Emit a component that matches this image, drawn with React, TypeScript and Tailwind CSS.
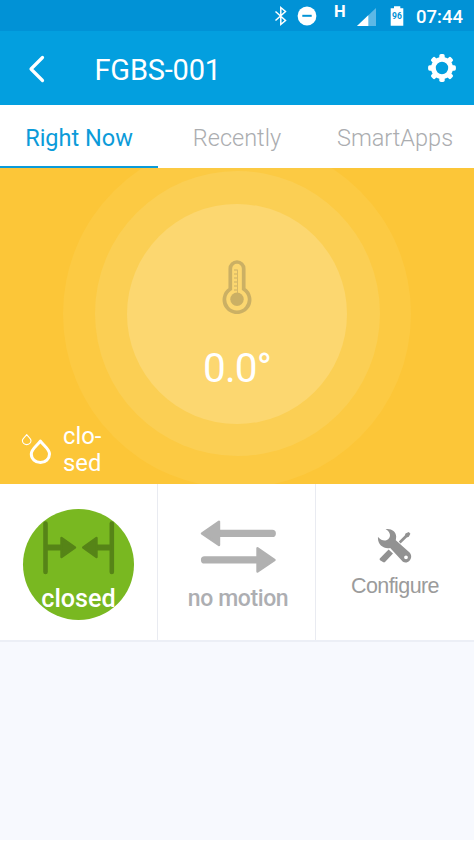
import type { ReactNode } from 'react';

const tabs = ['Right Now', 'Recently', 'SmartApps'];

const StatusBar = () => (
  <div className="flex h-[31px] shrink-0 justify-end bg-[#0192d6] text-white">
    <svg className="h-[31px] w-[144px]" viewBox="270 0 144 31" fill="none">
      <path d="M275.5 11.5 L285.5 20.5 L280.8 24.5 V7.5 L285.5 11.5 L275.5 20.5" stroke="#fff" strokeWidth="1.5" />
      <circle cx="307" cy="16" r="9.4" fill="#fff" />
      <path d="M302.3 15.8 H311.7" stroke="#0192d6" strokeWidth="2" />
      <path d="M357 26 L376 8 V26 Z" fill="#5cb8e6" />
      <path d="M357 26 L368.3 15.3 V26 Z" fill="#fff" />
      <path d="M394 6.3 H400.3 V8.3 H403.3 V25.7 H390.7 V8.3 H394 Z" fill="#fff" />
      <text x="334" y="17" fill="#fff" fontFamily="Roboto" fontSize="16.5" fontWeight="700">
        H
      </text>
      <text x="392" y="19.2" fill="#0192d6" fontFamily="Roboto" fontSize="8.5" fontWeight="700">
        96
      </text>
    </svg>
    <span className="w-[60px] pl-[2px] pt-[3px] text-[18.5px] font-medium leading-[28px]">07:44</span>
  </div>
);

const Header = () => (
  <header className="flex h-[74px] shrink-0 items-center bg-[#039fdf] text-white">
    <svg className="ml-[26px] mt-[2px] h-[32px] w-[22px]" viewBox="0 0 22 32" fill="none">
      <path d="M16.5 4.5 L5 16 L16.5 27.5" stroke="#fff" strokeWidth="3.2" strokeLinecap="round" strokeLinejoin="round" />
    </svg>
    <h1 className="ml-[46.5px] mt-[3px] flex-1 text-[29px] leading-[36px] tracking-[-0.2px]">FGBS-001</h1>
    <GearIcon />
  </header>
);

const GearIcon = () => (
  <svg className="mr-[16px] h-[32px] w-[32px]" viewBox="-16 -16 32 32">
    <circle r="8.6" fill="none" stroke="#fff" strokeWidth="4.8" />
    {[0, 45, 90, 135, 180, 225, 270, 315].map((angle) => (
      <rect key={angle} x="-2.7" y="-13.9" width="5.4" height="6" rx="1.7" fill="#fff" transform={`rotate(${angle})`} />
    ))}
  </svg>
);

const Tabs = () => (
  <nav className="grid h-[63px] shrink-0 grid-cols-3 bg-white text-[23.5px] leading-[30px] text-[#abadb0]">
    {tabs.map((tab, index) => (
      <div
        key={tab}
        className={
          index === 0
            ? 'border-b-2 border-[#0c9bd9] pt-[18px] text-center text-[#0c9bd9]'
            : 'pt-[18px] text-center font-light'
        }
      >
        {tab}
      </div>
    ))}
  </nav>
);

const Thermometer = () => (
  <svg className="h-[54px] w-[32px]" viewBox="0 0 32 54" fill="none" stroke="#cbb064">
    <path d="M9.3 29 V8.7 A6.7 6.7 0 0 1 22.7 8.7 V29 A12.6 12.6 0 1 1 9.3 29 Z" strokeWidth="3.7" />
    <circle cx="16" cy="39.2" r="6.7" fill="#cbb064" stroke="none" />
    <path d="M16.5 9.5 V34" strokeWidth="0.8" />
    <path d="M13 10 H16 M13 14 H16 M13 18 H16 M13 22 H16 M13 26 H16 M13 30 H16" strokeWidth="1" />
  </svg>
);

const Hero = () => (
  <section className="relative h-[315.5px] shrink-0 overflow-hidden bg-[#fcc638]">
    <div className="absolute left-[63px] top-[-28.5px] size-[348px] rounded-full bg-[#fcca43]" />
    <div className="absolute left-[94.5px] top-[3px] size-[285px] rounded-full bg-[#fbcf54]" />
    <div className="absolute left-[127px] top-[35.5px] size-[220px] rounded-full bg-[#fcd770]" />
    <div className="relative flex flex-col items-center pt-[92px] text-white">
      <Thermometer />
      <div className="mt-[30px] text-[40.5px] leading-[48px] tracking-[-0.8px]">0.0°</div>
    </div>
    <div className="absolute bottom-[6px] left-[20px] flex items-center text-white">
      <svg className="mb-[5px] h-[36px] w-[34px]" viewBox="20 428 34 36" fill="none" stroke="#fff" strokeLinejoin="round">
        <path d="M26.7 432.7 C25 435 22.4 436.5 22.4 438.6 A4.3 4 0 0 0 31 438.6 C31 436.5 28.4 435 26.7 432.7 Z" strokeWidth="1.1" />
        <path d="M40.4 439 C37.5 443.5 31.3 447 31.3 452 A9.1 8.6 0 0 0 49.5 452 C49.5 447 43.3 443.5 40.4 439 Z" strokeWidth="3" />
      </svg>
      <div className="ml-[9px] text-[23.8px] leading-[27.5px]">
        clo-
        <br />
        sed
      </div>
    </div>
  </section>
);

const Tile = ({ children }: { children: ReactNode }) => (
  <div className="flex flex-col items-center border-r-[1.5px] border-[#e9ebf1] last:border-r-0">{children}</div>
);

const Tiles = () => (
  <section className="grid h-[158.5px] shrink-0 grid-cols-3 border-b-2 border-[#eceff6] bg-white">
    <Tile>
      <div className="relative mt-[25px] size-[111px] rounded-full bg-[#79b821]">
        <svg className="absolute inset-0 size-full" viewBox="23.5 508.5 111 111" fill="#568417" stroke="#568417" strokeLinejoin="round">
          <path d="M46 523 V571.5 M112.3 523 V571.5" strokeWidth="4.6" strokeLinecap="round" />
          <path d="M46 547 H63 M112.3 547 H96" strokeWidth="6" />
          <path d="M62 537.5 V556.5 L75.5 547 Z M97 537.5 V556.5 L83.7 547 Z" strokeWidth="2.4" />
        </svg>
        <div className="absolute inset-x-0 top-[75px] flex justify-center text-[25.2px] font-medium leading-[30px] text-white">
          closed
        </div>
      </div>
    </Tile>
    <Tile>
      <svg className="ml-[2px] mt-[33px] h-[60px] w-[80px]" viewBox="198 517 80 60" fill="#b1b1b1" stroke="#b1b1b1" strokeLinejoin="round">
        <path d="M218 533.4 H272.3 M204.5 559.9 H259" strokeWidth="7.2" strokeLinecap="round" />
        <path d="M219 521.7 V545 L202 533.4 Z M257.5 548.3 V571.5 L274.5 559.9 Z" strokeWidth="2.4" />
      </svg>
      <div className="ml-[3px] mt-[7px] text-[23px] font-medium leading-[29px] tracking-[-0.4px] text-[#adaeb2]">no motion</div>
    </Tile>
    <Tile>
      <svg className="mt-[44px] h-[36px] w-[36px]" viewBox="378 528 36 36" fill="#929292">
        <path d="M380.8 558.5 L389.6 549.4 L394 553.4 L386 562 Q385 562.8 384 562 L381 560.2 Q380.2 559.4 380.8 558.5 Z" />
        <path d="M399.8 541.6 L405.8 535.5 L406.5 533.6 L409.8 532 L411.4 533.7 L409.8 536.8 L407.8 537.5 L401.6 543.6 Z" />
        <path
          fillRule="evenodd"
          d="M386.6 529.2 C392 528.2 396.8 531.2 397.2 536.5 L396.8 540.3 L410.6 552.5 C415 557.3 409.4 564.8 403.9 561.8 L391.2 548 C384.4 549.4 378.2 544 379 537 C382 540.4 385.4 541.2 387.8 540 C390.6 538.6 391.6 536 390.6 533.6 C390 531.6 388.6 530.2 386.6 529.2 Z M407 555.4 A1.9 1.9 0 1 0 407 559.2 A1.9 1.9 0 1 0 407 555.4 Z"
        />
      </svg>
      <div className="mt-[8px] font-['Liberation_Sans',sans-serif] text-[21.5px] leading-[29px] tracking-[-0.6px] text-[#9b9b9b]">
        Configure
      </div>
    </Tile>
  </section>
);

export default function App() {
  return (
    <main className="flex h-[842px] w-[474px] flex-col overflow-hidden border-b-2 border-white bg-[#f7f9fe] font-['Roboto',sans-serif]">
      <StatusBar />
      <Header />
      <Tabs />
      <Hero />
      <Tiles />
    </main>
  );
}
